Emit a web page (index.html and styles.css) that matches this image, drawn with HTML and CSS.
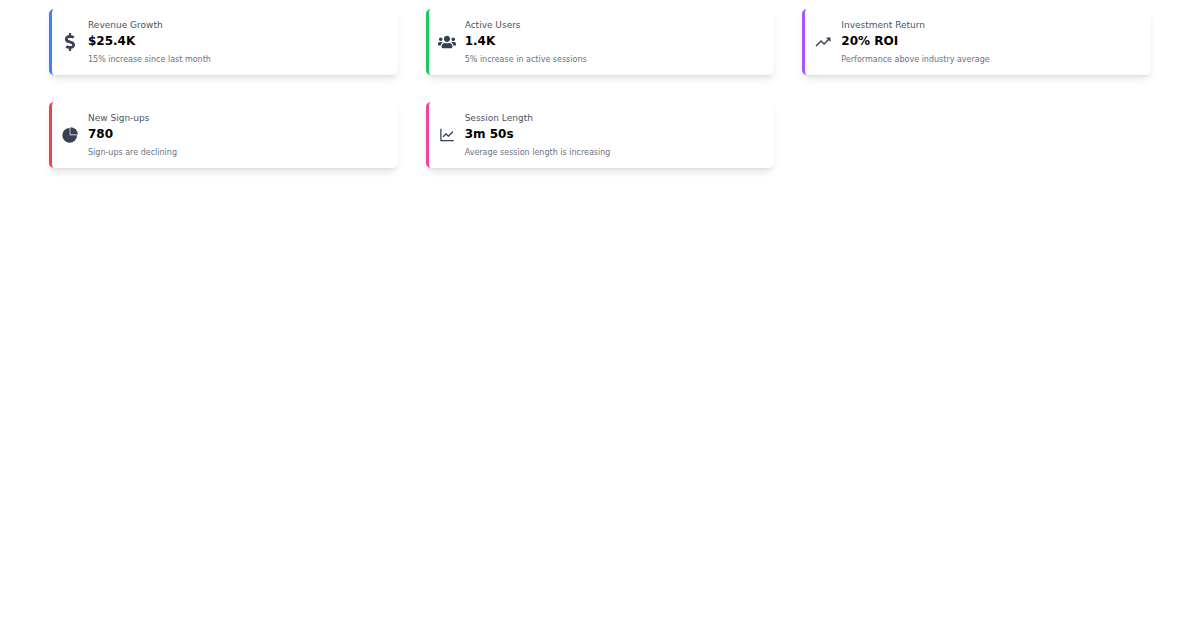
FILE: index.html
```
<!DOCTYPE html>
<html lang="en">
<head>
    <meta charset="UTF-8">
    <meta name="viewport" content="width=device-width, initial-scale=1.0">
    <title>Dashboard</title>
    <link rel="stylesheet" href="styles.css">
</head>
<body>
    <main class="cards">
        <div class="card blue">
            <svg class="icon" viewBox="0 0 288 512" aria-hidden="true"><path d="M209.2 233.4l-108-31.6C88.7 198.2 80 186.5 80 173.5c0-16.3 13.2-29.5 29.5-29.5h66.3c12.2 0 24.2 3.7 34.2 10.5 6.1 4.1 14.3 3.1 19.5-2l34.8-34c7.1-6.9 6.1-18.4-1.8-24.5C238 74.8 207.4 64.1 176 64V16c0-8.8-7.2-16-16-16h-32c-8.8 0-16 7.2-16 16v48h-2.5C45.8 64-5.4 118.7.5 183.6c4.2 46.1 39.4 83.6 83.8 96.6l102.5 30c12.5 3.7 21.2 15.3 21.2 28.3 0 16.3-13.2 29.5-29.5 29.5h-66.3C100 368 88 364.3 78 357.5c-6.1-4.1-14.3-3.1-19.5 2l-34.8 34c-7.1 6.9-6.1 18.4 1.8 24.5 24.5 19.2 55.1 29.9 86.5 30v48c0 8.8 7.2 16 16 16h32c8.8 0 16-7.2 16-16v-48.2c46.6-.9 90.3-28.6 105.7-72.7 21.5-61.6-14.6-124.8-72.5-141.7z"/></svg>
            <div class="card-text">
                <h2>Revenue Growth</h2>
                <p class="value">$25.4K</p>
                <p class="note">15% increase since last month</p>
            </div>
        </div>
        <div class="card green">
            <svg class="icon" viewBox="0 0 640 512" aria-hidden="true"><path d="M96 224c35.3 0 64-28.7 64-64s-28.7-64-64-64-64 28.7-64 64 28.7 64 64 64zm448 0c35.3 0 64-28.7 64-64s-28.7-64-64-64-64 28.7-64 64 28.7 64 64 64zm32 32h-64c-17.6 0-33.5 7.1-45.1 18.6 40.3 22.1 68.9 62 75.1 109.4h66c17.7 0 32-14.3 32-32v-32c0-35.3-28.7-64-64-64zm-256 0c61.9 0 112-50.1 112-112S381.9 32 320 32 208 82.1 208 144s50.1 112 112 112zm76.8 32h-8.3c-20.8 10-43.9 16-68.5 16s-47.6-6-68.5-16h-8.3C179.6 288 128 339.6 128 403.2V432c0 26.5 21.5 48 48 48h288c26.5 0 48-21.5 48-48v-28.8c0-63.6-51.6-115.2-115.2-115.2zm-223.7-13.4C161.5 263.1 145.6 256 128 256H64c-35.3 0-64 28.7-64 64v32c0 17.7 14.3 32 32 32h65.9c6.3-47.4 34.9-87.3 75.2-109.4z"/></svg>
            <div class="card-text">
                <h2>Active Users</h2>
                <p class="value">1.4K</p>
                <p class="note">5% increase in active sessions</p>
            </div>
        </div>
        <div class="card purple">
            <svg class="icon" viewBox="0 0 24 24" aria-hidden="true"><path d="M16 6l2.29 2.29-4.88 4.88-4-4L2 16.59 3.41 18l6-6 4 4 6.3-6.29L22 12V6z"/></svg>
            <div class="card-text">
                <h2>Investment Return</h2>
                <p class="value">20% ROI</p>
                <p class="note">Performance above industry average</p>
            </div>
        </div>
        <div class="card red">
            <svg class="icon" viewBox="0 0 18 18" aria-hidden="true"><path d="M8.700 9.300V1.900A7.400 7.400 0 1 0 16.100 9.300z"/><path d="M9.400 8.600V1.200A7.400 7.400 0 0 1 16.800 8.600z"/></svg>
            <div class="card-text">
                <h2>New Sign-ups</h2>
                <p class="value">780</p>
                <p class="note">Sign-ups are declining</p>
            </div>
        </div>
        <div class="card pink">
            <svg class="icon" viewBox="0 0 1024 1024" aria-hidden="true"><path d="M888 792H200V168c0-4.400-3.600-8-8-8h-56c-4.400 0-8 3.600-8 8v688c0 4.400 3.600 8 8 8h752c4.400 0 8-3.600 8-8v-56c0-4.400-3.600-8-8-8zM305.800 637.700c3.100 3.100 8.100 3.100 11.300 0l138.300-137.600L583 628.500c3.100 3.100 8.200 3.100 11.300 0l275.400-275.300c3.100-3.100 3.100-8.200 0-11.300l-39.600-39.600a8.030 8.030 0 00-11.300 0l-230 229.900L461.400 404a8.030 8.030 0 00-11.300 0L266.300 586.700a8.030 8.030 0 000 11.300l39.500 39.700z"/></svg>
            <div class="card-text">
                <h2>Session Length</h2>
                <p class="value">3m 50s</p>
                <p class="note">Average session length is increasing</p>
            </div>
        </div>
    </main>
</body>
</html>
```
FILE: styles.css
```
* {
    box-sizing: border-box;
    margin: 0;
    padding: 0;
}
body {
    background: white;
    font-family: "DejaVu Sans", sans-serif;
}
.cards {
    display: grid;
    grid-template-columns: repeat(3, 1fr);
    gap: 27px 28px;
    padding: 9px 49px;
}
.card {
    display: flex;
    align-items: center;
    gap: 9px;
    padding: 9px;
    background: white;
    border-left: 3px solid;
    border-radius: 5px;
    box-shadow: 0 6px 9px -2px rgba(0, 0, 0, 0.1), 0 2px 4px -2px rgba(0, 0, 0, 0.1);
}
.blue {
    border-color: #3b82f6;
}
.green {
    border-color: #22c55e;
}
.purple {
    border-color: #a855f7;
}
.red {
    border-color: #ef4444;
}
.pink {
    border-color: #ec4899;
}
.icon {
    width: 18px;
    height: 18px;
    flex-shrink: 0;
    fill: #374151;
}
.card-text h2 {
    font-size: 9px;
    font-weight: normal;
    line-height: 15px;
    color: #4b5563;
}
.value {
    font-size: 12px;
    font-weight: bold;
    line-height: 17px;
    color: black;
}
.note {
    margin-top: 4px;
    font-size: 8px;
    line-height: 12px;
    color: #6b7280;
}
@media (max-width: 800px) {
    .cards {
        grid-template-columns: 1fr;
    }
}
```
